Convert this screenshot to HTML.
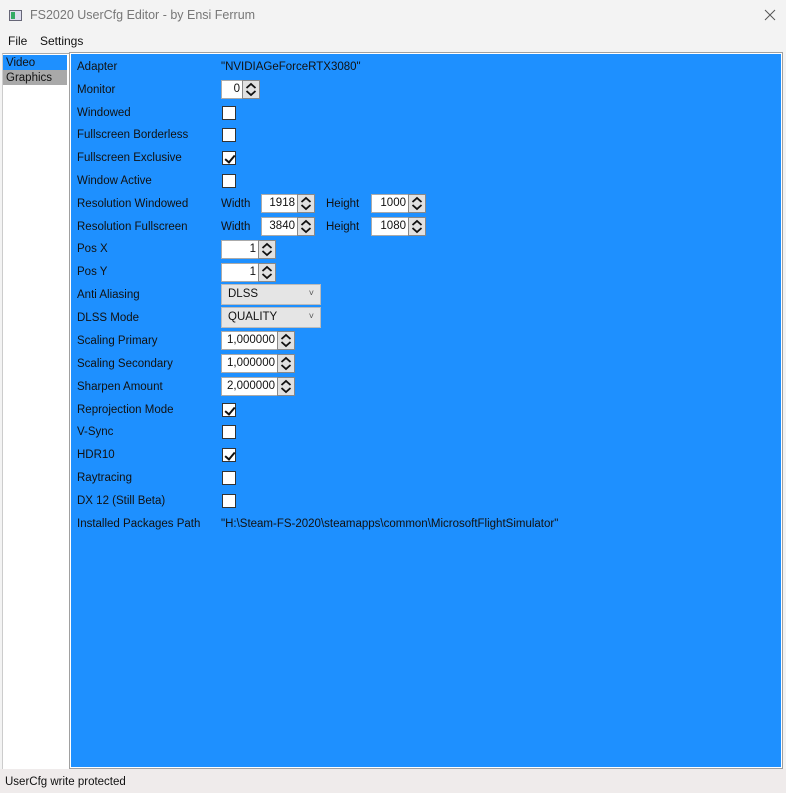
<!DOCTYPE html>
<html><head><meta charset="utf-8"><style>
*{margin:0;padding:0;box-sizing:border-box}
body{width:786px;height:793px;overflow:hidden;background:#f3f3f3;font-family:"Liberation Sans",sans-serif;font-size:11.5px;color:#111;position:relative}
.a{position:absolute;white-space:nowrap}
.t{font-size:11.5px;line-height:14px}
.cb{position:absolute;width:14px;height:14px;background:#fff;border:1px solid #333}
.cb.k::after{content:"";position:absolute;left:4px;top:1px;width:4px;height:8px;border:solid #111;border-width:0 2px 2px 0;transform:rotate(40deg)}
.box{position:absolute;height:19px;background:#fff;border:1px solid #aaa;text-align:right;padding-right:2px;line-height:17px;font-size:11.5px}
.sp{position:absolute;height:19px;width:18px;background:#e1e1e1;border:1px solid #888}
.sp svg{position:absolute;left:0;top:0}
.cmb{position:absolute;width:100px;height:21px;background:#e5e5e5;border:1px solid #bbb;padding-left:6px;line-height:19px}
.cmb span{position:absolute;right:6px;top:-1px;font-size:9px;color:#555}
</style></head><body>
<div class="a" style="left:9px;top:10px;width:13px;height:11px;border:1px solid #667;background:#dde"><div style="position:absolute;left:1px;top:1px;width:4px;height:7px;background:#3a6"></div></div>
<div class="a" style="left:30px;top:8px;font-size:12.5px;color:#777">FS2020 UserCfg Editor - by Ensi Ferrum</div>
<svg class="a" style="left:764px;top:9px" width="12" height="12"><path d="M1 1L11 11M11 1L1 11" stroke="#555" stroke-width="1"/></svg>
<div class="a t" style="left:8px;top:34px;font-size:12px">File</div>
<div class="a t" style="left:40px;top:34px;font-size:12px">Settings</div>
<div class="a" style="left:2px;top:53px;width:67px;height:716px;background:#fff;border-top:1px solid #aaa;border-left:1px solid #ccc"></div>
<div class="a" style="left:3px;top:55px;width:64px;height:15px;background:#1e90ff"></div>
<div class="a" style="left:3px;top:70px;width:64px;height:15px;background:#a9a9a9"></div>
<div class="a t" style="left:6px;top:56px">Video</div>
<div class="a t" style="left:6px;top:71px">Graphics</div>
<div class="a" style="left:69px;top:52px;width:714px;height:717px;border:1px solid #a0a0a0;background:#fff"></div>
<div class="a" style="left:71px;top:54px;width:710px;height:713px;background:#1e90ff"></div>
<div class="a" style="left:0;top:769px;width:786px;height:24px;background:#efebeb"></div>
<div class="a t" style="left:5px;top:775px">UserCfg write protected</div>

<div class="a t" style="left:77px;top:60px">Adapter</div>
<div class="a t" style="left:221px;top:60px">"NVIDIAGeForceRTX3080"</div>
<div class="a t" style="left:77px;top:83px">Monitor</div>
<div class="box" style="left:221px;top:80px;width:22px">0</div><div class="sp" style="left:242px;top:80px"><svg width="16" height="17"><path d="M3.5 7L8 3L12.5 7M3.5 10L8 14L12.5 10" fill="none" stroke="#111" stroke-width="1.8"/></svg></div>
<div class="a t" style="left:77px;top:106px">Windowed</div><div class="cb" style="left:222px;top:106px"></div>
<div class="a t" style="left:77px;top:128px">Fullscreen Borderless</div><div class="cb" style="left:222px;top:128px"></div>
<div class="a t" style="left:77px;top:151px">Fullscreen Exclusive</div><div class="cb k" style="left:222px;top:151px"></div>
<div class="a t" style="left:77px;top:174px">Window Active</div><div class="cb" style="left:222px;top:174px"></div>
<div class="a t" style="left:77px;top:197px">Resolution Windowed</div>
<div class="a t" style="left:221px;top:197px">Width</div>
<div class="box" style="left:261px;top:194px;width:37px">1918</div><div class="sp" style="left:297px;top:194px"><svg width="16" height="17"><path d="M3.5 7L8 3L12.5 7M3.5 10L8 14L12.5 10" fill="none" stroke="#111" stroke-width="1.8"/></svg></div>
<div class="a t" style="left:326px;top:197px">Height</div>
<div class="box" style="left:371px;top:194px;width:38px">1000</div><div class="sp" style="left:408px;top:194px"><svg width="16" height="17"><path d="M3.5 7L8 3L12.5 7M3.5 10L8 14L12.5 10" fill="none" stroke="#111" stroke-width="1.8"/></svg></div>
<div class="a t" style="left:77px;top:220px">Resolution Fullscreen</div>
<div class="a t" style="left:221px;top:220px">Width</div>
<div class="box" style="left:261px;top:217px;width:37px">3840</div><div class="sp" style="left:297px;top:217px"><svg width="16" height="17"><path d="M3.5 7L8 3L12.5 7M3.5 10L8 14L12.5 10" fill="none" stroke="#111" stroke-width="1.8"/></svg></div>
<div class="a t" style="left:326px;top:220px">Height</div>
<div class="box" style="left:371px;top:217px;width:38px">1080</div><div class="sp" style="left:408px;top:217px"><svg width="16" height="17"><path d="M3.5 7L8 3L12.5 7M3.5 10L8 14L12.5 10" fill="none" stroke="#111" stroke-width="1.8"/></svg></div>
<div class="a t" style="left:77px;top:242px">Pos X</div>
<div class="box" style="left:221px;top:240px;width:38px">1</div><div class="sp" style="left:258px;top:240px"><svg width="16" height="17"><path d="M3.5 7L8 3L12.5 7M3.5 10L8 14L12.5 10" fill="none" stroke="#111" stroke-width="1.8"/></svg></div>
<div class="a t" style="left:77px;top:265px">Pos Y</div>
<div class="box" style="left:221px;top:263px;width:38px">1</div><div class="sp" style="left:258px;top:263px"><svg width="16" height="17"><path d="M3.5 7L8 3L12.5 7M3.5 10L8 14L12.5 10" fill="none" stroke="#111" stroke-width="1.8"/></svg></div>
<div class="a t" style="left:77px;top:288px">Anti Aliasing</div>
<div class="cmb" style="left:221px;top:284px">DLSS<span>˅</span></div>
<div class="a t" style="left:77px;top:311px">DLSS Mode</div>
<div class="cmb" style="left:221px;top:307px">QUALITY<span>˅</span></div>
<div class="a t" style="left:77px;top:334px">Scaling Primary</div>
<div class="box" style="left:221px;top:331px;width:57px">1,000000</div><div class="sp" style="left:277px;top:331px"><svg width="16" height="17"><path d="M3.5 7L8 3L12.5 7M3.5 10L8 14L12.5 10" fill="none" stroke="#111" stroke-width="1.8"/></svg></div>
<div class="a t" style="left:77px;top:357px">Scaling Secondary</div>
<div class="box" style="left:221px;top:354px;width:57px">1,000000</div><div class="sp" style="left:277px;top:354px"><svg width="16" height="17"><path d="M3.5 7L8 3L12.5 7M3.5 10L8 14L12.5 10" fill="none" stroke="#111" stroke-width="1.8"/></svg></div>
<div class="a t" style="left:77px;top:380px">Sharpen Amount</div>
<div class="box" style="left:221px;top:377px;width:57px">2,000000</div><div class="sp" style="left:277px;top:377px"><svg width="16" height="17"><path d="M3.5 7L8 3L12.5 7M3.5 10L8 14L12.5 10" fill="none" stroke="#111" stroke-width="1.8"/></svg></div>
<div class="a t" style="left:77px;top:403px">Reprojection Mode</div><div class="cb k" style="left:222px;top:403px"></div>
<div class="a t" style="left:77px;top:425px">V-Sync</div><div class="cb" style="left:222px;top:425px"></div>
<div class="a t" style="left:77px;top:448px">HDR10</div><div class="cb k" style="left:222px;top:448px"></div>
<div class="a t" style="left:77px;top:471px">Raytracing</div><div class="cb" style="left:222px;top:471px"></div>
<div class="a t" style="left:77px;top:494px">DX 12 (Still Beta)</div><div class="cb" style="left:222px;top:494px"></div>
<div class="a t" style="left:77px;top:517px">Installed Packages Path</div>
<div class="a t" style="left:221px;top:517px">"H:\Steam-FS-2020\steamapps\common\MicrosoftFlightSimulator"</div>
</body></html>
